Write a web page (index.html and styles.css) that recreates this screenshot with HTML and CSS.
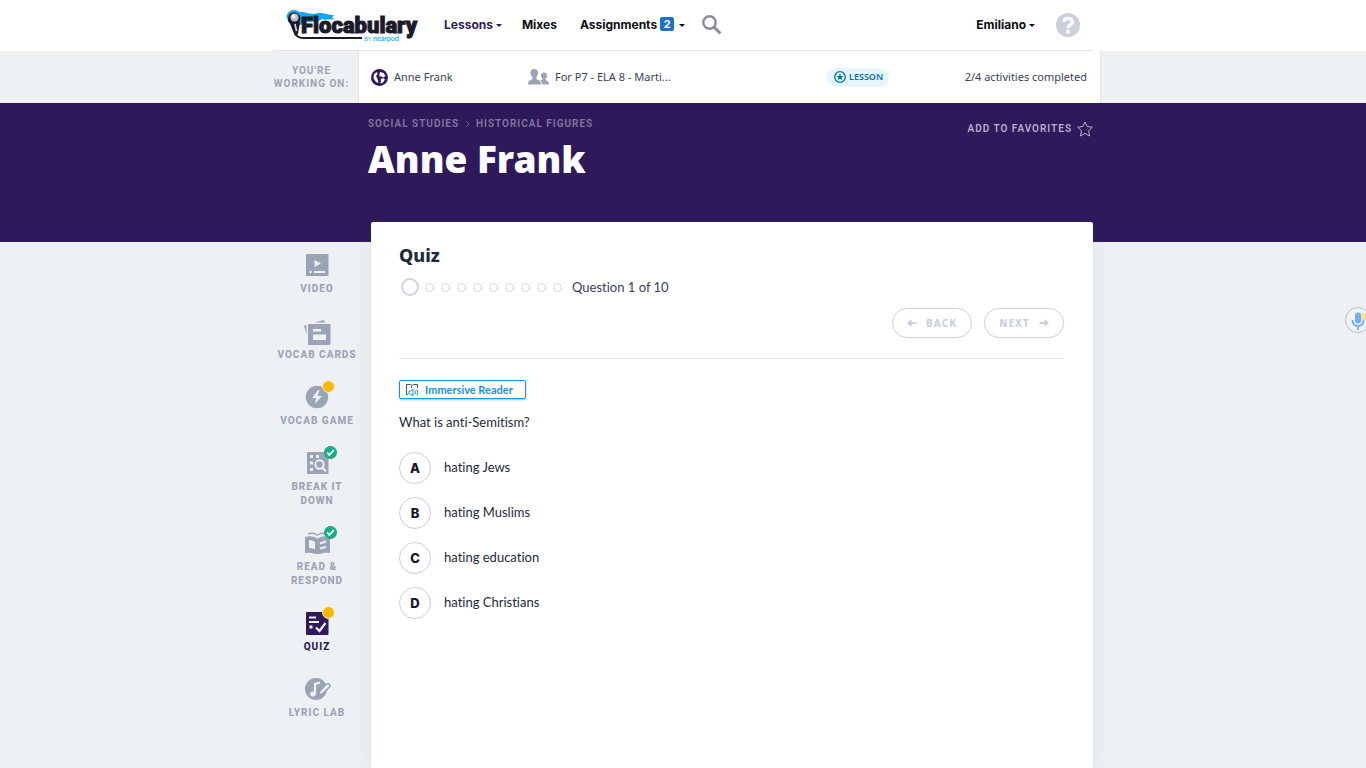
FILE: index.html
```html
<!DOCTYPE html>
<html lang="en">
<head>
<meta charset="utf-8">
<meta name="viewport" content="width=device-width, initial-scale=1">
<title>Anne Frank - Quiz</title>
<link rel="stylesheet" href="styles.css">
</head>
<body>
<header class="site-header">
  <nav class="nav wrap" aria-label="Main">
    <a class="logo" href="#" aria-label="Flocabulary by Nearpod">
      <svg width="134" height="34" viewBox="0 0 134 34">
        <path d="M11 3 C18 0 22 5 30 3.500 C37 1.500 43 6 49 5 C46 6 46 8 48 10 C43 8 40 11 36 9 C32 12 26 12 21 12 L12 16 Z" fill="#0da7fa"/>
        <path d="M9 20 C9 26 12 28 18 28 H76" fill="none" stroke="#1b1a2b" stroke-width="2"/>
        <path d="M3 11 L6.500 20 L9 26 L12 24 L14 12 Z" fill="#1b1a2b"/>
        <circle cx="8" cy="8.500" r="6.500" fill="#1b1a2b"/>
        <path d="M1.500 8 A6.500 6.500 0 0 1 14 5" fill="none" stroke="#0da7fa" stroke-width="2"/>
        <circle cx="8.500" cy="7.500" r="4" fill="#b9bec7"/>
        <circle cx="7.500" cy="6.500" r="2" fill="#f5f6f7"/>
        <path d="M9 14 L10.500 21" stroke="#d5d8dd" stroke-width="1.600"/>
        <text class="logo-text" x="15" y="23">Flocabulary</text>
        <text class="logo-by" x="78" y="31">BY</text>
        <text class="logo-near" x="87" y="31">nearpod</text>
      </svg>
    </a>
    <a class="nav-link lessons" href="#">Lessons<span class="caret"></span></a>
    <a class="nav-link mixes" href="#">Mixes</a>
    <a class="nav-link assignments" href="#">Assignments<span class="count">2</span><span class="caret"></span></a>
    <button class="plain search" type="button" aria-label="Search">
      <svg width="20" height="20" viewBox="0 0 20 20" fill="none" stroke="#8c8c98"><circle cx="7.5" cy="7.5" r="6.2" stroke-width="2.4"/><path d="M12 12 L18.5 18.5" stroke-width="3"/></svg>
    </button>
    <a class="nav-link user" href="#">Emiliano<span class="caret"></span></a>
    <button class="plain help" type="button" aria-label="Help">
      <svg width="24" height="24" viewBox="0 0 24 24"><circle cx="12" cy="12" r="12" fill="#cbd0dc"/><path d="M8 8.800 C8 4.200 16.500 4.200 16.500 8.900 C16.500 11.600 12 11.400 12 15.200" fill="none" stroke="#fff" stroke-width="3.400"/><circle cx="12" cy="18.800" r="2" fill="#fff"/></svg>
    </button>
  </nav>
</header>

<section class="workbar" aria-label="Current assignment">
  <div class="wrap work-row">
    <div class="work-label">YOU'RE<br>WORKING ON:</div>
    <div class="work-info">
      <span class="work-topic">
        <svg width="17" height="17" viewBox="0 0 17 17"><circle cx="8.500" cy="8.500" r="8.500" fill="#2e1a5b"/><path d="M3 5 L6 3 L6.500 5 L5 7 L6.500 10 L7.500 14 L5 13 L2.500 9 Z M9 3 L12.500 4 L14.500 7 L12 8.500 L10 7 L8.500 8 L8.500 5 Z M10 10 L12 9 L14 10.500 L12 13.500 L9.500 14.500 Z" fill="#fff"/></svg>
        Anne Frank
      </span>
      <span class="work-class">
        <svg width="21" height="16" viewBox="0 0 21 16" fill="#9ba3b6"><path d="M6.200 0 C9 0 10.400 2 10 4.600 C9.800 6.500 9 7.400 8.300 8 V10 L12 12 Q13 13 13 15.500 H0 Q0 13 1 12 L4.400 10 V8 C3.500 7.400 2.700 6.500 2.500 4.600 C2 2 3.600 0 6.200 0 Z"/><path d="M16 3.600 C18.200 3.600 19.200 5 19 7 C18.900 8.300 18.200 9.200 17.600 9.700 V11 L20 12.300 Q21 13 21 15.500 H14 Q14 13 13 12 L12 11.500 L14.400 10.800 V9.700 C13.700 9.200 13.100 8.300 13 7 C12.800 5 14 3.600 16 3.600 Z"/></svg>
        For P7 - ELA 8 - Marti...
      </span>
      <span class="pill">
        <svg width="12" height="12" viewBox="0 0 12 12"><circle cx="6" cy="6" r="5.300" fill="none" stroke="#0377a6" stroke-width="1.300"/><path d="M6 2.500 L7 4.900 L9.500 5 L7.600 6.600 L8.200 9 L6 7.700 L3.800 9 L4.400 6.600 L2.500 5 L5 4.900 Z" fill="#0377a6"/></svg>
        LESSON
      </span>
      <span class="work-done">2/4 activities completed</span>
    </div>
  </div>
</section>

<section class="hero">
  <div class="wrap hero-row">
    <div class="hero-main">
      <div class="crumbs"><a href="#">SOCIAL STUDIES</a><svg width="5" height="8" viewBox="0 0 5 8"><path d="M1 1 L4 4 L1 7" fill="none" stroke="#6b5b8d"/></svg><a href="#">HISTORICAL FIGURES</a></div>
      <h1>Anne Frank</h1>
    </div>
    <button class="plain favorite" type="button">ADD TO FAVORITES
      <svg width="16" height="16" viewBox="0 0 16 16"><path d="M8 1 L10.200 5.500 L15.300 6.200 L11.600 9.700 L12.500 15 L8 12.400 L3.500 15 L4.400 9.700 L0.700 6.200 L5.800 5.500 Z" fill="none" stroke="#b8afca"/></svg>
    </button>
  </div>
</section>

<div class="wrap page">
  <aside class="side">
    <a href="#"><svg width="28" height="28" viewBox="0 0 28 28"><rect x="3" y="3" width="22.500" height="22" rx="1" fill="#9ba3b6"/><path d="M11.500 9 V16 L18 12.500 Z" fill="#edf1f4"/><circle cx="7.500" cy="21" r="1.300" fill="#edf1f4"/><path d="M11 21 H22" stroke="#edf1f4" stroke-width="2"/></svg>VIDEO</a>
    <a href="#"><svg width="28" height="28" viewBox="0 0 28 28"><path d="M11 5.500 L21 3 L22 5.500 Z M1 8.500 L3.500 8 V18 Z" fill="#9ba3b6"/><rect x="5" y="7" width="22.500" height="21" rx="1" fill="#9ba3b6"/><path d="M10 13.300 H18" stroke="#edf1f4" stroke-width="2.600"/><rect x="10" y="17.500" width="13" height="5.500" fill="#edf1f4"/></svg>VOCAB CARDS</a>
    <a href="#"><svg width="28" height="28" viewBox="0 0 28 28"><circle cx="14" cy="14" r="11.200" fill="#9ba3b6"/><path d="M15 7 L9 15 H13 L12 21 L19 13 H14.500 L16.500 7 Z" fill="#edf1f4"/></svg><span class="dot"></span>VOCAB GAME</a>
    <a href="#"><svg width="28" height="28" viewBox="0 0 28 28"><rect x="4" y="3" width="21.500" height="22" rx="1" fill="#9ba3b6"/><path d="M7 6 h3 v3 h-3 Z M7 12.500 h3 v3 h-3 Z M7 19 h3 v3 h-3 Z M13 6 h3 v3 h-3 Z" fill="#edf1f4"/><circle cx="16.500" cy="15.500" r="4.200" fill="#9ba3b6" stroke="#edf1f4" stroke-width="2"/><path d="M19.500 18.500 L23 22.500" stroke="#edf1f4" stroke-width="2"/></svg><svg class="done" width="12" height="12" viewBox="0 0 12 12"><circle cx="6" cy="6" r="6" fill="#1fac8a"/><path d="M3 6 L5 8.300 L9 3.800" fill="none" stroke="#fff" stroke-width="1.600"/></svg>BREAK IT<br>DOWN</a>
    <a href="#"><svg width="28" height="28" viewBox="0 0 28 28"><path d="M5 4 Q11 2.500 14.500 5.500 Q18 2.500 22 4 V5.500 Q18 4 14.500 7 Q11 4 5 5.500 Z" fill="#9ba3b6"/><path d="M2 8 Q9 6 14.500 9.500 Q20 6 27 8 V24 Q21 23 17.500 25 H11.500 Q8 23 2 24 Z" fill="#9ba3b6"/><path d="M6 11 Q9 11 12 13 V20.500 Q9 19 6 19 Z" fill="#edf1f4"/><path d="M17 14.500 L23 12.500 M17 19.500 L23 18" stroke="#edf1f4" stroke-width="2"/></svg><svg class="done" width="12" height="12" viewBox="0 0 12 12"><circle cx="6" cy="6" r="6" fill="#1fac8a"/><path d="M3 6 L5 8.300 L9 3.800" fill="none" stroke="#fff" stroke-width="1.600"/></svg>READ &amp;<br>RESPOND</a>
    <a class="active" href="#" aria-current="page"><svg width="28" height="28" viewBox="0 0 28 28"><rect x="3" y="3" width="22.500" height="23" rx="1" fill="#2e1a5b"/><path d="M6 8.500 H13 M6 13 H16" stroke="#edf1f4" stroke-width="2.200"/><path d="M6.500 16.500 h3 v3 h-3 Z" fill="#edf1f4"/><path d="M13 18.500 L16.500 22 L22.500 14" fill="none" stroke="#edf1f4" stroke-width="2.200"/></svg><span class="dot"></span>QUIZ</a>
    <a href="#"><svg width="28" height="28" viewBox="0 0 28 28"><circle cx="13" cy="14" r="11" fill="#9ba3b6"/><path d="M12 19 V9 L17 7.500" fill="none" stroke="#edf1f4" stroke-width="2.200"/><ellipse cx="10" cy="19" rx="2.800" ry="2.400" fill="#edf1f4"/><path d="M15.500 20 L16.500 16.500 L23 9.500 Q25 8 26.500 9.500 Q27.500 11 26 12.500 L19 19 Z" fill="#edf1f4" stroke="#9ba3b6" stroke-width="1.600"/></svg>LYRIC LAB</a>
  </aside>

  <main class="card">
    <h2>Quiz</h2>
    <div class="progress">
      <span class="steps"><i class="current"></i><i></i><i></i><i></i><i></i><i></i><i></i><i></i><i></i><i></i></span>
      <span>Question 1 of 10</span>
    </div>
    <div class="moves">
      <button type="button" disabled><svg width="10" height="8" viewBox="0 0 10 8"><path d="M0 4 L4.500 0 V3 H9.500 V5 H4.500 V8 Z" fill="#cbd0dc"/></svg>BACK</button>
      <button type="button" disabled>NEXT<svg width="10" height="8" viewBox="0 0 10 8"><path d="M10 4 L5.500 0 V3 H0.500 V5 H5.500 V8 Z" fill="#cbd0dc"/></svg></button>
    </div>
    <button class="reader" type="button">
      <svg width="14" height="14" viewBox="0 0 14 14" fill="none"><path d="M3 11.500 H1.500 V1.500 H5.500 L7 2.500 L8.500 1.500 H12.500 V5 M6.500 3 V5" stroke="#4a5160"/><path d="M4 8 H5.500 L8 6 V13 L5.500 11 H4 Z M10 7.500 Q11 9.500 10 11.500 M12 6.500 Q14 9.500 12 12.500" stroke="#1593e6"/></svg>
      Immersive Reader
    </button>
    <p class="question">What is anti-Semitism?</p>
    <div class="answers">
      <button class="plain answer" type="button"><b>A</b><span>hating Jews</span></button>
      <button class="plain answer" type="button"><b>B</b><span>hating Muslims</span></button>
      <button class="plain answer" type="button"><b>C</b><span>hating education</span></button>
      <button class="plain answer" type="button"><b>D</b><span>hating Christians</span></button>
    </div>
  </main>
</div>

<button class="plain mic" type="button" aria-label="Dictate">
  <svg width="28" height="28" viewBox="0 0 28 28"><circle cx="14" cy="14" r="12.500" fill="#f0f2f6" stroke="#b9bcc4"/><path d="M17 7.500 H26 V14 H17 Z" fill="#ffe082"/><rect x="11" y="6.500" width="6" height="11" rx="3" fill="#72aefa"/><path d="M8.500 14 Q8.500 20 14 20 Q19.500 20 19.500 14 M14 20 V24" fill="none" stroke="#72aefa" stroke-width="1.800"/></svg>
</button>
</body>
</html>
```
FILE: styles.css
```css
* { box-sizing: border-box; }
body {
  margin: 0;
  min-height: 100vh;
  display: flex;
  flex-direction: column;
  overflow-x: hidden;
  background: #edf1f4;
  color: #1d2a3b;
  font: 13px/20px Lato, "Noto Sans", sans-serif;
  font-variant-ligatures: none;
}
a { color: inherit; text-decoration: none; }
svg { display: block; flex: none; }
.plain { border: 0; padding: 0; background: none; font: inherit; color: inherit; }
.wrap { width: 100%; max-width: 820px; margin: 0 auto; }

.site-header { background: #fff; }
.nav { display: flex; align-items: center; height: 51px; padding: 0 13px; border-bottom: 1px solid #e3e6ea; }
.logo { padding-top: 4px; }
.logo-text { font: 900 22px Roboto, sans-serif; fill: #1b1a2b; stroke: #1b1a2b; stroke-width: 1px; }
.logo-by { font: 6px Lato, sans-serif; fill: #27b3f8; }
.logo-near { font: 700 7px Lato, sans-serif; fill: #27b3f8; }
.nav-link { display: flex; align-items: center; font: 700 12px/20px Inter, sans-serif; color: #0d0b14; }
.lessons { margin-left: 24px; color: #2e1a5b; }
.mixes { margin-left: 20px; }
.assignments { margin-left: 23px; }
.caret { margin-left: 3px; border: 3px solid transparent; border-top-color: currentColor; border-bottom: 0; }
.count { width: 14px; height: 14px; margin: 0 2px 2px 3px; border-radius: 2px; background: #1b74c5; color: #fff; font-size: 11px; line-height: 14px; text-align: center; }
.search { margin-left: 17px; }
.user { margin-left: auto; }
.help { margin-left: 21px; }

.work-row { display: flex; height: 52px; }
.work-label { flex: none; display: flex; justify-content: center; width: 85px; padding: 13px 8px 0 0; color: #9ba3b6; font: 700 10px/13px Roboto, sans-serif; letter-spacing: 1px; text-align: center; white-space: nowrap; }
.work-info { flex: 1; display: flex; align-items: center; margin-right: -8px; padding: 0 13px 0 12px; border: solid #e1e5ea; border-width: 0 1px; background: #fff; color: #3a4254; font: 11px/20px "Noto Sans", sans-serif; }
.work-topic, .work-class { display: flex; align-items: center; gap: 6px; }
.work-topic { width: 157px; }
.work-class { width: 299px; }
.pill { display: flex; align-items: center; gap: 3px; height: 19px; padding: 0 6px 0 7px; border-radius: 10px; background: #e5f5fd; color: #0377a6; font-weight: 600; font-size: 9px; }
.work-done { margin-left: auto; }

.hero { height: 139px; background: #2e1a5b; }
.hero-row { display: flex; justify-content: space-between; padding-left: 95px; }
.crumbs { display: flex; align-items: center; gap: 6px; margin-top: 13px; color: #8377a0; font: 600 10px/15px Roboto, sans-serif; letter-spacing: 1px; }
h1 { margin: 6px 0 0; color: #fff; font: 900 37px/44px "Noto Sans", sans-serif; }
.favorite { display: flex; align-items: center; align-self: flex-start; gap: 5px; margin-top: 16px; color: #b8afca; font: 600 10px/20px Roboto, sans-serif; letter-spacing: 1px; }

.page { flex: 1; display: flex; }
.side { flex: none; width: 98px; padding: 9px 10px 0 0; }
.side a { position: relative; display: block; margin-bottom: 21px; color: #9ba3b6; font: 800 10px/14px Roboto, sans-serif; letter-spacing: 1px; text-align: center; white-space: nowrap; }
.side svg { margin: 0 auto 3px; }
.side .active { color: #2e1a5b; }
.side .dot, .side .done { position: absolute; top: -3px; left: 49px; width: 13px; height: 13px; margin: 0; border: 1px solid #edf1f4; border-radius: 50%; background: #ffb700; }
.side .done { left: 51px; border: 0; background: #1fac8a; }

.card { flex: 1; margin-top: -20px; padding: 23px 29px 28px 28px; border-radius: 2px 2px 0 0; background: #fff; box-shadow: 0 8px 24px rgba(46, 60, 90, .08); }
h2 { margin: 0; font: 800 18px/20px "Noto Sans", sans-serif; }
.progress { display: flex; align-items: center; gap: 10px; margin-top: 12px; color: #3a4254; }
.steps { display: flex; align-items: center; gap: 7px; padding-left: 2px; }
.steps i { width: 9px; height: 9px; border: 1px solid #cfd3de; border-radius: 50%; }
.steps .current { width: 18px; height: 18px; margin-right: -1px; border-width: 2px; }
.moves { display: flex; justify-content: flex-end; gap: 12px; margin-top: 11px; padding-bottom: 20px; border-bottom: 1px solid #eaecef; }
.moves button { display: flex; align-items: center; justify-content: center; gap: 9px; width: 80px; height: 30px; border: 1px solid #cbcedd; border-radius: 15px; background: #fff; color: #cbd0dc; font: 800 10px/15px "Noto Sans", sans-serif; letter-spacing: 1px; }
.reader { display: flex; align-items: center; gap: 6px; height: 19px; margin-top: 21px; padding: 0 12px 0 5px; border: 1px solid #1593e6; border-radius: 2px; background: #fff; box-shadow: 0 1px 2px rgba(0, 0, 0, .25); color: #1593e6; font: 700 11px/17px Lato, sans-serif; }
.question { margin: 13px 0 20px; }
.answers { display: flex; flex-direction: column; align-items: flex-start; gap: 13px; }
.answer { display: flex; align-items: center; gap: 13px; }
.answer span { padding-bottom: 3px; }
.answer b { width: 32px; height: 32px; border: 1px solid #cbcedd; border-radius: 50%; color: #17152a; font: 800 13px/30px Inter, sans-serif; text-align: center; }
.mic { position: fixed; top: 306px; right: -6px; }
```
